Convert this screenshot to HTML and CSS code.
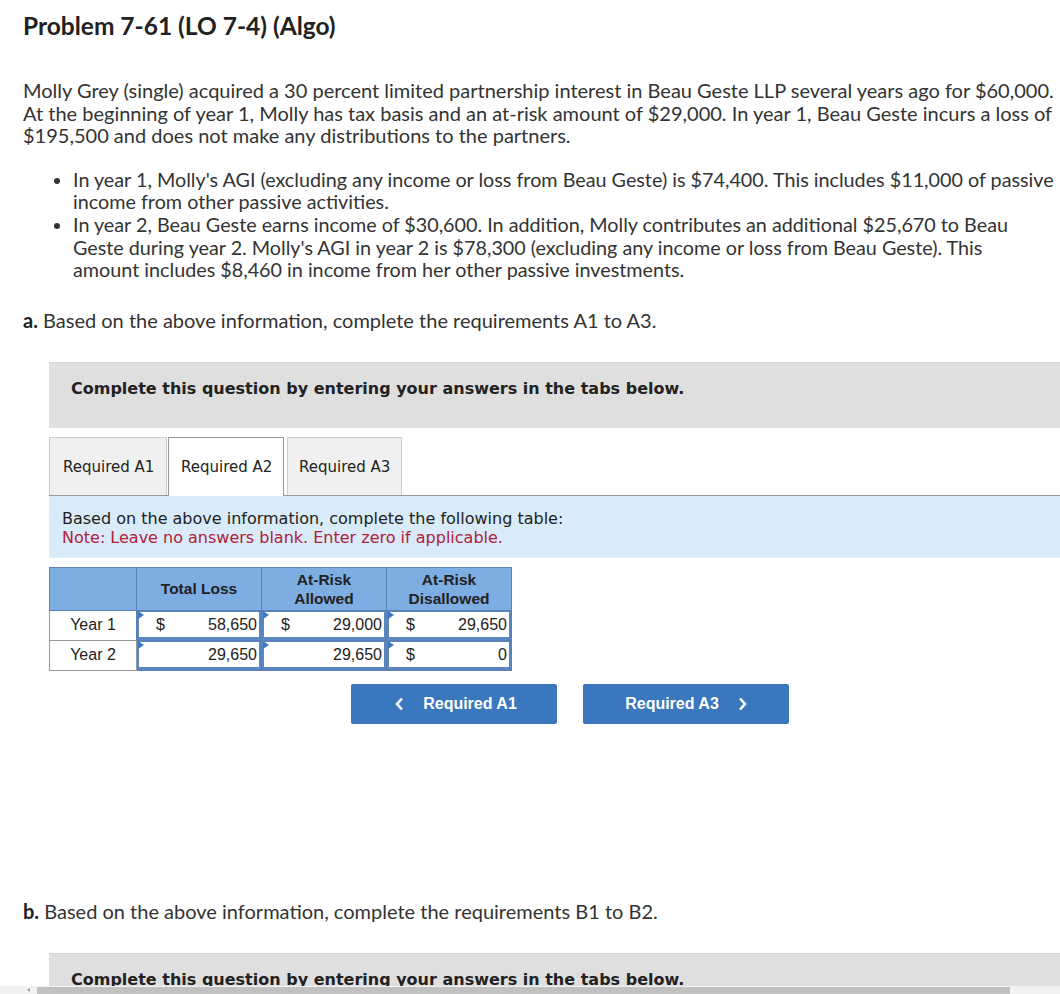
FILE: index.html
```html
<!DOCTYPE html>
<html>
<head>
<meta charset="utf-8">
<link rel="stylesheet" href="styles.css">
</head>
<body>
<div class="page">
  <h1 class="title">Problem 7-61 (LO 7-4) (Algo)</h1>
  <p class="intro">Molly Grey (single) acquired a 30 percent limited partnership interest in Beau Geste LLP several years ago for $60,000.<br>At the beginning of year 1, Molly has tax basis and an at-risk amount of $29,000. In year 1, Beau Geste incurs a loss of<br>$195,500 and does not make any distributions to the partners.</p>
  <ul class="facts">
    <li>In year 1, Molly's AGI (excluding any income or loss from Beau Geste) is $74,400. This includes $11,000 of passive<br>income from other passive activities.</li>
    <li>In year 2, Beau Geste earns income of $30,600. In addition, Molly contributes an additional $25,670 to Beau<br>Geste during year 2. Molly's AGI in year 2 is $78,300 (excluding any income or loss from Beau Geste). This<br>amount includes $8,460 in income from her other passive investments.</li>
  </ul>
  <p class="part"><b>a.</b> Based on the above information, complete the requirements A1 to A3.</p>

  <div class="widget">
    <div class="banner">Complete this question by entering your answers in the tabs below.</div>
    <div class="tabs">
      <div class="tab">Required A1</div>
      <div class="tab active">Required A2</div>
      <div class="tab">Required A3</div>
    </div>
    <div class="instr">
      <div>Based on the above information, complete the following table:</div>
      <div class="note">Note: Leave no answers blank. Enter zero if applicable.</div>
    </div>
    <table class="grid">
      <tr class="head">
        <th class="c0"></th>
        <th class="c1">Total Loss</th>
        <th class="c2">At-Risk<br>Allowed</th>
        <th class="c3">At-Risk<br>Disallowed</th>
      </tr>
      <tr>
        <td class="lbl">Year 1</td>
        <td class="in"><div class="box"><span class="cur">$</span><span class="val">58,650</span></div></td>
        <td class="in"><div class="box"><span class="cur">$</span><span class="val">29,000</span></div></td>
        <td class="in"><div class="box"><span class="cur">$</span><span class="val">29,650</span></div></td>
      </tr>
      <tr>
        <td class="lbl">Year 2</td>
        <td class="in"><div class="box"><span class="cur"></span><span class="val">29,650</span></div></td>
        <td class="in"><div class="box"><span class="cur"></span><span class="val">29,650</span></div></td>
        <td class="in"><div class="box"><span class="cur">$</span><span class="val">0</span></div></td>
      </tr>
    </table>
    <div class="navs">
      <div class="btn"><svg class="chev" width="9" height="14" viewBox="0 0 9 14"><path d="M7 1.5 L2 7 L7 12.5" fill="none" stroke="#fff" stroke-width="2.6"/></svg>Required A1</div>
      <div class="btn">Required A3<svg class="chev right" width="9" height="14" viewBox="0 0 9 14"><path d="M2 1.5 L7 7 L2 12.5" fill="none" stroke="#fff" stroke-width="2.6"/></svg></div>
    </div>
  </div>

  <p class="part partb"><b>b.</b> Based on the above information, complete the requirements B1 to B2.</p>
  <div class="widget second">
    <div class="banner">Complete this question by entering your answers in the tabs below.</div>
  </div>
</div>
<div class="hscroll"><span class="arrow"></span><span class="thumb"></span></div>
</body>
</html>
```
FILE: styles.css
```css
html { overflow: hidden; }
body {
  margin: 0;
  background: #fff;
  color: #333;
  font-family: Lato, "Open Sans", sans-serif;
}
.page {
  width: 1090px;
  padding: 0 0 0 23px;
}
.title {
  margin: 0;
  padding-top: 12px;
  font-size: 24.5px;
  line-height: 28px;
  font-weight: 700;
  color: #222;
}
.intro {
  margin: 39px 0 0;
  font-size: 20px;
  line-height: 22.6px;
  width: 1100px;
}
.facts {
  margin: 22px 0 0;
  padding-left: 50px;
  font-size: 19.75px;
  line-height: 22.6px;
  width: 1050px;
}
.facts li { margin: 0; }
.part {
  margin: 26px 0 0;
  font-size: 20px;
  line-height: 24px;
}
.part b { color: #222; }
.widget {
  margin-left: 26px;
  font-family: "DejaVu Sans", Verdana, sans-serif;
}
.banner {
  margin-top: 30px;
  height: 66px;
  background: #dfdfdf;
  box-sizing: border-box;
  padding: 16px 0 0 22px;
  font-size: 16px;
  font-weight: 700;
  color: #222;
  border-top: 1px solid #d6d6d6;
}
.tabs {
  display: flex;
  margin-top: 9px;
  border-bottom: 1px solid #999;
  height: 58px;
}
.tab {
  box-sizing: border-box;
  height: 58px;
  padding: 20px 0 0 13px;
  font-size: 15px;
  color: #222;
  background: #f0f0f0;
  border: 1px solid #ccc;
  border-bottom: none;
  margin-right: 2px;
  white-space: nowrap;
}
.tab:first-child { width: 118px; margin-right: 1px; }
.tab.active {
  background: #fff;
  border-color: #999;
  height: 59px;
  width: 116px;
  margin-right: 3px;
  padding-left: 12px;
}
.tab:last-child { width: 115px; padding-left: 11px; }
.instr {
  height: 62px;
  background: #d9eaf8;
  box-sizing: border-box;
  padding: 13px 0 0 13px;
  font-size: 16px;
  line-height: 19px;
  color: #222;
  border-bottom: 1px solid #e6eef6;
}
.note { color: #b0203a; }
.grid {
  margin-top: 9px;
  border-collapse: collapse;
  font-family: "Liberation Sans", Arial, sans-serif;
  font-size: 16px;
  color: #222;
}
.grid th, .grid td {
  border: 1px solid #5b7fb0;
  padding: 0;
}
.head th {
  background: #7dade2;
  height: 42px;
  font-weight: 700;
  font-size: 15.5px;
  line-height: 19px;
}
.c0 { width: 86px; }
.c1 { width: 124px; }
.c2 { width: 124px; }
.c3 { width: 124px; }
.lbl {
  height: 29px;
  text-align: center;
  background: #fff;
  border-color: #999 !important;
}
.grid tr:nth-child(2) .lbl { border-right-color: #5b7fb0 !important; }
td.in { background: #5b86c0; padding: 0; }
.box {
  position: relative;
  display: flex;
  justify-content: space-between;
  align-items: center;
  height: 25px;
  margin: 1px 2px 2px 2px;
  background: #fff;
  padding: 0 2px 0 17px;
}
.box::before {
  content: "";
  position: absolute;
  left: -1px;
  top: -1px;
  border-left: 6px solid #3a78c2;
  border-top: 4px solid transparent;
  border-bottom: 4px solid transparent;
}
.navs {
  display: flex;
  gap: 26px;
  margin: 13px 0 0 302px;
}
.btn {
  width: 206px;
  height: 40px;
  box-sizing: border-box;
  background: #3a77bd;
  border-radius: 2px;
  color: #fff;
  font-family: "Liberation Sans", Arial, sans-serif;
  font-weight: 700;
  font-size: 16px;
  display: flex;
  align-items: center;
  justify-content: center;
}
.chev { margin-right: 19px; margin-left: 4px; }
.chev.right { margin-right: 0; margin-left: 19px; }
.partb { margin-top: 175px; }
.second .banner { margin-top: 30px; }
.hscroll {
  position: fixed;
  left: 0;
  right: 0;
  bottom: 0;
  height: 8px;
  background: #f1f1f1;
}
.hscroll .thumb {
  position: absolute;
  left: 37px;
  width: 973px;
  top: 1px;
  height: 7px;
  background: #c1c1c1;
}
.hscroll .arrow {
  position: absolute;
  left: 27px;
  top: 2px;
  border-right: 3px solid #a3a3a3;
  border-top: 2px solid transparent;
  border-bottom: 2px solid transparent;
}
```
